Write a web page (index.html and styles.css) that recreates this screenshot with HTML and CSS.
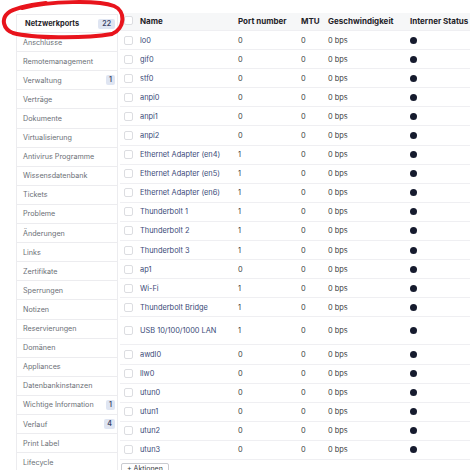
FILE: index.html
```html
<!DOCTYPE html>
<html>
<head>
<meta charset="utf-8">
<link rel="stylesheet" href="styles.css">
</head>
<body>
<div class="page">
  <nav class="side">
    <div class="item active"><span>Netzwerkports</span><span class="badge">22</span></div>
    <div class="item"><span>Anschlüsse</span></div>
    <div class="item"><span>Remotemanagement</span></div>
    <div class="item"><span>Verwaltung</span><span class="badge">1</span></div>
    <div class="item"><span>Verträge</span></div>
    <div class="item"><span>Dokumente</span></div>
    <div class="item"><span>Virtualisierung</span></div>
    <div class="item"><span>Antivirus Programme</span></div>
    <div class="item"><span>Wissensdatenbank</span></div>
    <div class="item"><span>Tickets</span></div>
    <div class="item"><span>Probleme</span></div>
    <div class="item"><span>Änderungen</span></div>
    <div class="item"><span>Links</span></div>
    <div class="item"><span>Zertifikate</span></div>
    <div class="item"><span>Sperrungen</span></div>
    <div class="item"><span>Notizen</span></div>
    <div class="item"><span>Reservierungen</span></div>
    <div class="item"><span>Domänen</span></div>
    <div class="item"><span>Appliances</span></div>
    <div class="item"><span>Datenbankinstanzen</span></div>
    <div class="item"><span>Wichtige Information</span><span class="badge">1</span></div>
    <div class="item"><span>Verlauf</span><span class="badge">4</span></div>
    <div class="item"><span>Print Label</span></div>
    <div class="item"><span>Lifecycle</span></div>
  </nav>
  <main class="main">
    <div class="grid">
      <div class="row head">
        <span class="cb"><i class="box"></i></span><span>Name</span><span>Port number</span><span>MTU</span><span>Geschwindigkeit</span><span>Interner Status</span>
      </div>
      <div class="row"><span class="cb"><i class="box"></i></span><span class="nm">lo0</span><span>0</span><span>0</span><span>0 bps</span><span><i class="dot"></i></span></div>
      <div class="row"><span class="cb"><i class="box"></i></span><span class="nm">gif0</span><span>0</span><span>0</span><span>0 bps</span><span><i class="dot"></i></span></div>
      <div class="row"><span class="cb"><i class="box"></i></span><span class="nm">stf0</span><span>0</span><span>0</span><span>0 bps</span><span><i class="dot"></i></span></div>
      <div class="row"><span class="cb"><i class="box"></i></span><span class="nm">anpi0</span><span>0</span><span>0</span><span>0 bps</span><span><i class="dot"></i></span></div>
      <div class="row"><span class="cb"><i class="box"></i></span><span class="nm">anpi1</span><span>0</span><span>0</span><span>0 bps</span><span><i class="dot"></i></span></div>
      <div class="row"><span class="cb"><i class="box"></i></span><span class="nm">anpi2</span><span>0</span><span>0</span><span>0 bps</span><span><i class="dot"></i></span></div>
      <div class="row"><span class="cb"><i class="box"></i></span><span class="nm">Ethernet Adapter (en4)</span><span>1</span><span>0</span><span>0 bps</span><span><i class="dot"></i></span></div>
      <div class="row"><span class="cb"><i class="box"></i></span><span class="nm">Ethernet Adapter (en5)</span><span>1</span><span>0</span><span>0 bps</span><span><i class="dot"></i></span></div>
      <div class="row"><span class="cb"><i class="box"></i></span><span class="nm">Ethernet Adapter (en6)</span><span>1</span><span>0</span><span>0 bps</span><span><i class="dot"></i></span></div>
      <div class="row"><span class="cb"><i class="box"></i></span><span class="nm">Thunderbolt 1</span><span>1</span><span>0</span><span>0 bps</span><span><i class="dot"></i></span></div>
      <div class="row"><span class="cb"><i class="box"></i></span><span class="nm">Thunderbolt 2</span><span>1</span><span>0</span><span>0 bps</span><span><i class="dot"></i></span></div>
      <div class="row"><span class="cb"><i class="box"></i></span><span class="nm">Thunderbolt 3</span><span>1</span><span>0</span><span>0 bps</span><span><i class="dot"></i></span></div>
      <div class="row"><span class="cb"><i class="box"></i></span><span class="nm">ap1</span><span>0</span><span>0</span><span>0 bps</span><span><i class="dot"></i></span></div>
      <div class="row"><span class="cb"><i class="box"></i></span><span class="nm">Wi-Fi</span><span>1</span><span>0</span><span>0 bps</span><span><i class="dot"></i></span></div>
      <div class="row"><span class="cb"><i class="box"></i></span><span class="nm">Thunderbolt Bridge</span><span>1</span><span>0</span><span>0 bps</span><span><i class="dot"></i></span></div>
      <div class="row tall"><span class="cb"><i class="box"></i></span><span class="nm">USB 10/100/1000 LAN</span><span>1</span><span>0</span><span>0 bps</span><span><i class="dot"></i></span></div>
      <div class="row"><span class="cb"><i class="box"></i></span><span class="nm">awdl0</span><span>0</span><span>0</span><span>0 bps</span><span><i class="dot"></i></span></div>
      <div class="row"><span class="cb"><i class="box"></i></span><span class="nm">llw0</span><span>0</span><span>0</span><span>0 bps</span><span><i class="dot"></i></span></div>
      <div class="row"><span class="cb"><i class="box"></i></span><span class="nm">utun0</span><span>0</span><span>0</span><span>0 bps</span><span><i class="dot"></i></span></div>
      <div class="row"><span class="cb"><i class="box"></i></span><span class="nm">utun1</span><span>0</span><span>0</span><span>0 bps</span><span><i class="dot"></i></span></div>
      <div class="row"><span class="cb"><i class="box"></i></span><span class="nm">utun2</span><span>0</span><span>0</span><span>0 bps</span><span><i class="dot"></i></span></div>
      <div class="row"><span class="cb"><i class="box"></i></span><span class="nm">utun3</span><span>0</span><span>0</span><span>0 bps</span><span><i class="dot"></i></span></div>
    </div>
    <div class="actions"><button class="btn">+ Aktionen</button></div>
  </main>
</div>
<svg class="mark" width="130" height="42" viewBox="0 0 130 42">
  <path d="M22 8 C50 1, 98 0, 114 6 C126 11, 125 29, 112 34 C82 39, 32 38, 13 33 C3 29, 1 19, 8 13 C14 8, 30 5, 46 3" fill="none" stroke="#e8141c" stroke-width="4" stroke-linecap="round"/>
</svg>
</body>
</html>
```
FILE: styles.css
```css
* { box-sizing: border-box; }
html, body { margin: 0; padding: 0; }
body {
  background: #ffffff;
  font-family: Inter, "Noto Sans", sans-serif;
  font-size: 7.4px;
  color: #333;
  width: 474px;
  height: 470px;
  overflow: hidden;
  position: relative;
}
.page {
  display: flex;
  gap: 2px;
  padding: 14px 0 0 16px;
}
.side {
  width: 102px;
  flex: none;
  display: flex;
  flex-direction: column;
}
.item {
  height: 19.1px;
  display: flex;
  align-items: center;
  justify-content: space-between;
  padding: 0 2px 0 6px;
  border: 1px solid #ececef;
  border-top: none;
  background: #fff;
  color: #6b6f76;
  font-size: 7.2px;
}
.item:first-child { border-top: 1px solid #ececef; }
.item.active { color: #1f2328; font-weight: 700; padding-left: 8px; font-size: 7.4px; }
.badge {
  background: #dfe5f2;
  color: #3b4668;
  border-radius: 2px;
  font-size: 7px;
  font-weight: 600;
  padding: 1px 3px;
  line-height: 8px;
}
.item.active .badge { padding: 1px 4px; }
.main { flex: 1; min-width: 0; padding-top: 0; }
.grid { width: 350px; }
.row {
  display: grid;
  grid-template-columns: 20px 98px 63px 27px 82px 60px;
  align-items: center;
  height: 19.1px;
  border-bottom: 1px solid #efeff2;
  color: #3a3d42;
}
.row.head {
  height: 18px;
  margin-top: -1px;
  background: #f6f7f8;
  font-weight: 700;
  font-size: 8px;
  color: #1f2328;
  padding-bottom: 2px;
}
.row.tall { height: 28px; }
.cb { display: flex; padding-left: 4px; }
.box {
  width: 9px;
  height: 9px;
  border: 1px solid #dcdde1;
  border-radius: 2px;
  background: #fff;
  display: block;
}
.nm { color: #3b4a78; }
.dot {
  display: block;
  width: 7px;
  height: 7px;
  border-radius: 50%;
  background: #161b2e;
}
.actions { padding: 3px 0 0 1px; }
.btn {
  font-family: Inter, "Noto Sans", sans-serif;
  font-size: 7px;
  color: #3a3d42;
  background: #fff;
  border: 1px solid #c9cbd0;
  border-radius: 2px;
  padding: 1px 5px;
  height: 12px;
  line-height: 8px;
}
.mark { position: absolute; left: 0; top: 0; pointer-events: none; }
```
